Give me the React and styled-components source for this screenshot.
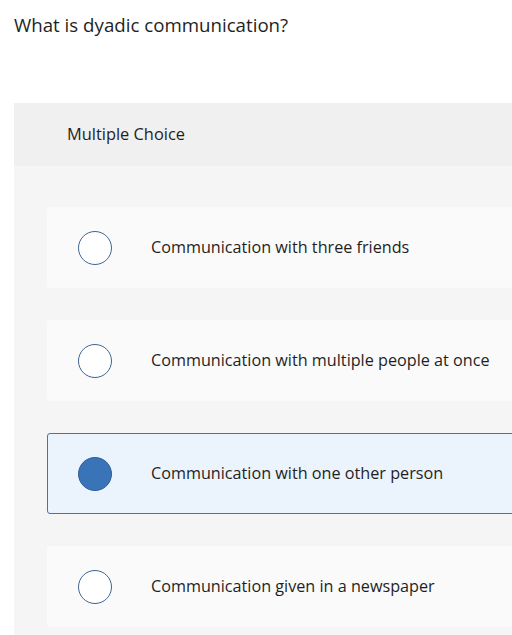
import React, { useState } from "react";
import styled, { createGlobalStyle } from "styled-components";

const Global = createGlobalStyle`
  html, body { margin: 0; padding: 0; background: #ffffff; }
  body { font-family: "Open Sans", "Lato", sans-serif; color: #1f1f1f; overflow: hidden; }
`;

const Page = styled.div`
  width: 512px;
  height: 635px;
  overflow: hidden;
  padding: 13px 0 0 14px;
  box-sizing: border-box;
`;

const Title = styled.h1`
  margin: 0;
  font-size: 18.7px;
  font-weight: 400;
  line-height: 24px;
  color: #1f1f1f;
`;

const Panel = styled.section`
  margin-top: 66px;
  width: 520px;
  background: #f5f5f5;
  padding-bottom: 20px;
`;

const PanelHeader = styled.div`
  height: 63px;
  background: #f0f0f0;
  display: flex;
  align-items: center;
  padding-left: 53px;
  padding-bottom: 3px;
  box-sizing: border-box;
  font-size: 16.4px;
  color: #1f1f1f;
`;

const Options = styled.div`
  display: flex;
  flex-direction: column;
  gap: 32px;
  padding: 41px 0 0 33px;
`;

const Option = styled.label`
  display: flex;
  align-items: center;
  height: 81px;
  box-sizing: border-box;
  border-radius: 3px;
  background: ${(p) => (p.$selected ? "#ebf3fc" : "#fafafa")};
  border: 1px solid ${(p) => (p.$selected ? "#3b76b8" : "transparent")};
  padding-left: 30px;
  cursor: pointer;
`;

const Radio = styled.span`
  width: 34px;
  height: 34px;
  box-sizing: border-box;
  border-radius: 50%;
  border: 1.5px solid ${(p) => (p.$selected ? "#2f5f95" : "#3d6690")};
  background: ${(p) => (p.$selected ? "#3a74b8" : "#ffffff")};
  flex-shrink: 0;
`;

const OptionText = styled.span`
  margin-left: 39px;
  margin-bottom: 1px;
  font-size: 16.2px;
  color: #1f1f1f;
`;

const choices = [
  "Communication with three friends",
  "Communication with multiple people at once",
  "Communication with one other person",
  "Communication given in a newspaper",
];

export default function App() {
  const [sel, setSel] = useState(2);
  return (
    <>
      <Global />
      <Page>
        <Title>What is dyadic communication?</Title>
        <Panel>
          <PanelHeader>Multiple Choice</PanelHeader>
          <Options>
            {choices.map((c, i) => (
              <Option key={c} $selected={sel === i} onClick={() => setSel(i)}>
                <Radio $selected={sel === i} />
                <OptionText>{c}</OptionText>
              </Option>
            ))}
          </Options>
        </Panel>
      </Page>
    </>
  );
}
